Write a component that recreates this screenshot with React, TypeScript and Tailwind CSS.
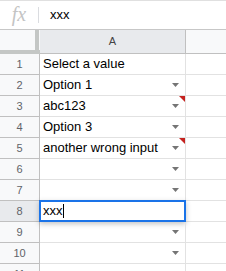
import React from "react";

const rows: { n: number; text: string; arrow: boolean; error: boolean }[] = [
    { n: 1, text: "Select a value", arrow: false, error: false },
    { n: 2, text: "Option 1", arrow: true, error: false },
    { n: 3, text: "abc123", arrow: true, error: true },
    { n: 4, text: "Option 3", arrow: true, error: false },
    { n: 5, text: "another wrong input", arrow: true, error: true },
    { n: 6, text: "", arrow: true, error: false },
    { n: 7, text: "", arrow: true, error: false },
    { n: 8, text: "xxx", arrow: false, error: false },
    { n: 9, text: "", arrow: true, error: false },
    { n: 10, text: "", arrow: true, error: false },
    { n: 11, text: "", arrow: true, error: false },
];

function Arrow() {
    return (
        <svg width="7" height="4" viewBox="0 0 7 4" className="absolute right-[6px] top-1/2 -translate-y-1/2">
            <path d="M0 0 H7 L3.5 4 Z" fill="#757575" />
        </svg>
    );
}

export default function App() {
    return (
        <div className="w-[226px] h-[271px] overflow-hidden bg-white" style={{ fontFamily: '"Liberation Sans", Arial, sans-serif' }}>
            {/* Formula bar */}
            <div className="h-[30px] flex items-center border-t border-[#e0e0e0] border-b border-b-[#c7c7c7]">
                <div className="w-[39px] h-[16px] flex items-center justify-center border-r border-[#dadce0]">
                    <span className="text-[20px] italic text-[#c4c4c4] leading-none -mt-[2px]" style={{ fontFamily: '"Liberation Serif", serif' }}>
                        fx
                    </span>
                </div>
                <span className="pl-[11px] text-[13px] text-black">xxx</span>
            </div>

            {/* Column headers */}
            <div className="h-[24px] flex">
                <div className="w-[40px] flex flex-col bg-[#f8f9fa]">
                    <div className="flex-1 flex">
                        <div className="w-[35px]" />
                        <div className="w-[4px] bg-[#c4c7c5]" />
                    </div>
                    <div className="h-[4px] bg-[#c4c7c5]" />
                </div>
                <div className="w-[146px] bg-[#e8eaed] border-r border-b border-[#c0c0c0] flex items-center justify-center text-[11px] text-[#444]">
                    A
                </div>
                <div className="flex-1 bg-[#f8f9fa] border-b border-[#c0c0c0]" />
            </div>

            {/* Rows */}
            {rows.map((r) => {
                const selected = r.n === 8;
                return (
                    <div key={r.n} className="h-[21px] flex">
                        <div
                            className={`w-[40px] flex items-center justify-center text-[11px] text-[#5f6368] border-r border-b border-[#c0c0c0] ${
                                selected ? "bg-[#e8eaed]" : "bg-[#f8f9fa]"
                            }`}
                        >
                            {r.n}
                        </div>
                        <div className="relative w-[146px] border-r border-b border-[#e2e2e2] flex items-center pl-[3px] text-[13px] text-black whitespace-nowrap">
                            {r.text}
                            {selected && (
                                <>
                                    <span className="w-px h-[14px] bg-black" />
                                    <div className="absolute -left-px -top-px w-[147px] h-[22px] border-2 border-[#1a73e8] shadow-[0_2px_5px_rgba(60,64,67,0.3)]" />
                                </>
                            )}
                            {r.arrow && <Arrow />}
                            {r.error && (
                                <svg width="6" height="6" viewBox="0 0 6 6" className="absolute right-0 top-0">
                                    <path d="M0 0 H6 V6 Z" fill="#c5221f" />
                                </svg>
                            )}
                        </div>
                        <div className="flex-1 border-b border-[#e2e2e2]" />
                    </div>
                );
            })}
        </div>
    );
}
